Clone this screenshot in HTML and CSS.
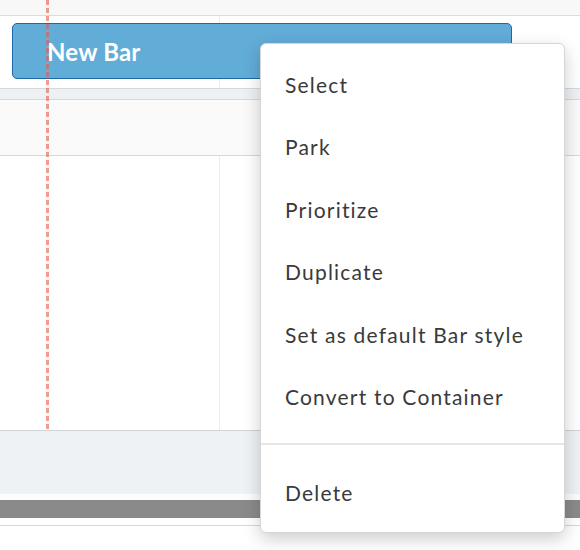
FILE: index.html
```html
<!DOCTYPE html>
<html>
<head>
<meta charset="utf-8">
<link rel="stylesheet" href="styles.css">
</head>
<body>
<div class="board">
  <div class="top-strip"></div>
  <div class="bar-row">
    <div class="bar"><span class="bar-label">New Bar</span></div>
  </div>
  <div class="band"></div>
  <div class="sub-row"></div>
  <div class="lane"></div>
  <div class="footer"></div>
  <div class="gap"></div>
  <div class="scrollbar"></div>
  <div class="after"></div>
  <div class="today-line"></div>
</div>
<ul class="menu">
  <li class="menu-item">Select</li>
  <li class="menu-item">Park</li>
  <li class="menu-item">Prioritize</li>
  <li class="menu-item">Duplicate</li>
  <li class="menu-item">Set as default Bar style</li>
  <li class="menu-item">Convert to Container</li>
  <li class="menu-sep"></li>
  <li class="menu-item">Delete</li>
</ul>
</body>
</html>
```

FILE: styles.css
```css
html, body {
  margin: 0;
  padding: 0;
  background: #ffffff;
  font-family: "Lato", "Liberation Sans", sans-serif;
}

.board {
  position: relative;
  width: 580px;
  height: 550px;
  display: flex;
  flex-direction: column;
  overflow: hidden;
}

.top-strip {
  height: 15px;
  background: #f8f8f8;
  border-bottom: 1px solid #dcdcdc;
  flex: none;
}

.bar-row {
  height: 72px;
  flex: none;
  box-sizing: border-box;
  padding: 7px 0 0 12px;
  background: linear-gradient(to right, transparent 219px, #ececec 219px, #ececec 220px, transparent 220px);
}

.bar {
  width: 500px;
  height: 56px;
  box-sizing: border-box;
  background: #62acd8;
  border: 1px solid #1d69a6;
  border-radius: 5px;
  display: flex;
  align-items: center;
  padding-left: 34px;
}

.bar-label {
  color: #ffffff;
  font-weight: 700;
  font-size: 24px;
  letter-spacing: 0.2px;
}

.band {
  height: 10px;
  flex: none;
  background: #eef1f4;
  border-top: 1px solid #d5d8dc;
  border-bottom: 1px solid #d5d8dc;
}

.sub-row {
  height: 55px;
  flex: none;
  background: #fafafa;
  border-bottom: 1px solid #d8d8d8;
}

.lane {
  height: 274px;
  flex: none;
  background: linear-gradient(to right, transparent 219px, #ececec 219px, #ececec 220px, transparent 220px);
  border-bottom: 1px solid #cfd4d9;
}

.footer {
  height: 63px;
  flex: none;
  background: #eef2f5;
}

.gap {
  height: 6px;
  flex: none;
  background: #fcfcfc;
}

.scrollbar {
  height: 18px;
  flex: none;
  background: #8a8a8a;
}

.after {
  height: 7px;
  flex: none;
  background: #ffffff;
  border-bottom: 1px solid #d8d8d8;
}

.today-line {
  position: absolute;
  left: 46px;
  top: 0;
  width: 3px;
  height: 430px;
  background: repeating-linear-gradient(to bottom, rgba(232, 90, 70, 0.6) 0, rgba(232, 90, 70, 0.6) 5px, transparent 5px, transparent 8px);
}

.menu {
  position: absolute;
  left: 260px;
  top: 43px;
  width: 305px;
  height: 490px;
  box-sizing: border-box;
  margin: 0;
  padding: 9px 0 9px;
  list-style: none;
  background: #ffffff;
  border: 1px solid #d6d6d6;
  border-radius: 6px;
  box-shadow: 0 6px 18px rgba(0, 0, 0, 0.2);
}

.menu-item {
  height: 62.5px;
  display: flex;
  align-items: center;
  padding-left: 24px;
  font-size: 21px;
  color: #3a3a3a;
  letter-spacing: 1.2px;
}

.menu-sep {
  height: 2px;
  background: #e6e6e6;
  margin: 15px 0 16px;
}
```
